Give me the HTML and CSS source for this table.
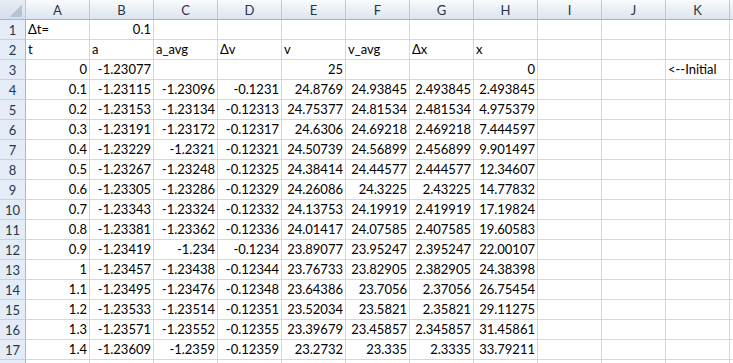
FILE: index.html
```html
<!DOCTYPE html>
<html lang="en">
<head>
    <meta charset="UTF-8">
    <title>Sheet1</title>
    <link rel="stylesheet" href="styles.css">
</head>
<body>
    <table class="sheet">
        <colgroup>
            <col class="col-rowhead">
            <col span="12" class="col-cell">
        </colgroup>
        <thead>
            <tr>
                <th class="corner"><span class="corner-mark"></span></th>
                <th>A</th><th>B</th><th>C</th><th>D</th><th>E</th><th>F</th>
                <th>G</th><th>H</th><th>I</th><th>J</th><th>K</th><th></th>
            </tr>
        </thead>
        <tbody>
            <tr><th>1</th><td>Δt=</td><td class="num">0.1</td><td></td><td></td><td></td><td></td><td></td><td></td><td></td><td></td><td></td><td></td></tr>
            <tr><th>2</th><td>t</td><td>a</td><td>a_avg</td><td>Δv</td><td>v</td><td>v_avg</td><td>Δx</td><td>x</td><td></td><td></td><td></td><td></td></tr>
            <tr><th>3</th><td class="num">0</td><td class="num">-1.23077</td><td></td><td></td><td class="num">25</td><td></td><td></td><td class="num">0</td><td></td><td></td><td>&lt;--Initial</td><td></td></tr>
            <tr><th>4</th><td class="num">0.1</td><td class="num">-1.23115</td><td class="num">-1.23096</td><td class="num">-0.1231</td><td class="num">24.8769</td><td class="num">24.93845</td><td class="num">2.493845</td><td class="num">2.493845</td><td></td><td></td><td></td><td></td></tr>
            <tr><th>5</th><td class="num">0.2</td><td class="num">-1.23153</td><td class="num">-1.23134</td><td class="num">-0.12313</td><td class="num">24.75377</td><td class="num">24.81534</td><td class="num">2.481534</td><td class="num">4.975379</td><td></td><td></td><td></td><td></td></tr>
            <tr><th>6</th><td class="num">0.3</td><td class="num">-1.23191</td><td class="num">-1.23172</td><td class="num">-0.12317</td><td class="num">24.6306</td><td class="num">24.69218</td><td class="num">2.469218</td><td class="num">7.444597</td><td></td><td></td><td></td><td></td></tr>
            <tr><th>7</th><td class="num">0.4</td><td class="num">-1.23229</td><td class="num">-1.2321</td><td class="num">-0.12321</td><td class="num">24.50739</td><td class="num">24.56899</td><td class="num">2.456899</td><td class="num">9.901497</td><td></td><td></td><td></td><td></td></tr>
            <tr><th>8</th><td class="num">0.5</td><td class="num">-1.23267</td><td class="num">-1.23248</td><td class="num">-0.12325</td><td class="num">24.38414</td><td class="num">24.44577</td><td class="num">2.444577</td><td class="num">12.34607</td><td></td><td></td><td></td><td></td></tr>
            <tr><th>9</th><td class="num">0.6</td><td class="num">-1.23305</td><td class="num">-1.23286</td><td class="num">-0.12329</td><td class="num">24.26086</td><td class="num">24.3225</td><td class="num">2.43225</td><td class="num">14.77832</td><td></td><td></td><td></td><td></td></tr>
            <tr><th>10</th><td class="num">0.7</td><td class="num">-1.23343</td><td class="num">-1.23324</td><td class="num">-0.12332</td><td class="num">24.13753</td><td class="num">24.19919</td><td class="num">2.419919</td><td class="num">17.19824</td><td></td><td></td><td></td><td></td></tr>
            <tr><th>11</th><td class="num">0.8</td><td class="num">-1.23381</td><td class="num">-1.23362</td><td class="num">-0.12336</td><td class="num">24.01417</td><td class="num">24.07585</td><td class="num">2.407585</td><td class="num">19.60583</td><td></td><td></td><td></td><td></td></tr>
            <tr><th>12</th><td class="num">0.9</td><td class="num">-1.23419</td><td class="num">-1.234</td><td class="num">-0.1234</td><td class="num">23.89077</td><td class="num">23.95247</td><td class="num">2.395247</td><td class="num">22.00107</td><td></td><td></td><td></td><td></td></tr>
            <tr><th>13</th><td class="num">1</td><td class="num">-1.23457</td><td class="num">-1.23438</td><td class="num">-0.12344</td><td class="num">23.76733</td><td class="num">23.82905</td><td class="num">2.382905</td><td class="num">24.38398</td><td></td><td></td><td></td><td></td></tr>
            <tr><th>14</th><td class="num">1.1</td><td class="num">-1.23495</td><td class="num">-1.23476</td><td class="num">-0.12348</td><td class="num">23.64386</td><td class="num">23.7056</td><td class="num">2.37056</td><td class="num">26.75454</td><td></td><td></td><td></td><td></td></tr>
            <tr><th>15</th><td class="num">1.2</td><td class="num">-1.23533</td><td class="num">-1.23514</td><td class="num">-0.12351</td><td class="num">23.52034</td><td class="num">23.5821</td><td class="num">2.35821</td><td class="num">29.11275</td><td></td><td></td><td></td><td></td></tr>
            <tr><th>16</th><td class="num">1.3</td><td class="num">-1.23571</td><td class="num">-1.23552</td><td class="num">-0.12355</td><td class="num">23.39679</td><td class="num">23.45857</td><td class="num">2.345857</td><td class="num">31.45861</td><td></td><td></td><td></td><td></td></tr>
            <tr><th>17</th><td class="num">1.4</td><td class="num">-1.23609</td><td class="num">-1.2359</td><td class="num">-0.12359</td><td class="num">23.2732</td><td class="num">23.335</td><td class="num">2.3335</td><td class="num">33.79211</td><td></td><td></td><td></td><td></td></tr>
            <tr><th></th><td></td><td></td><td></td><td></td><td></td><td></td><td></td><td></td><td></td><td></td><td></td><td></td></tr>
        </tbody>
    </table>
</body>
</html>
```

FILE: styles.css
```css
* {
    margin: 0;
    padding: 0;
    box-sizing: border-box;
}

body {
    font-family: Lato, "Liberation Sans", sans-serif;
    font-size: 13px;
    color: #000;
    background: #fff;
    overflow: hidden;
}

.sheet {
    table-layout: fixed;
    border-collapse: separate;
    border-spacing: 0;
    width: 794px;
}

.col-rowhead {
    width: 26px;
}

.col-cell {
    width: 64px;
}

.sheet th,
.sheet td {
    height: 20px;
    border-right: 1px solid #d0d7e5;
    border-bottom: 1px solid #d0d7e5;
    padding: 0 2px 2px;
    white-space: nowrap;
    overflow: hidden;
    vertical-align: bottom;
    text-align: left;
    font-weight: normal;
}

.sheet td.num {
    text-align: right;
}

.sheet thead th {
    background: linear-gradient(#f9fbfd, #dde4ee);
    border-right: 1px solid #b9c8da;
    border-bottom: 1px solid #9eb6ce;
    color: #27364a;
    text-align: center;
    vertical-align: middle;
    padding: 0;
}

.sheet tbody th {
    background: #e4ecf7;
    border-right: 1px solid #9eb6ce;
    border-bottom: 1px solid #c5d1e0;
    color: #27364a;
    text-align: center;
    vertical-align: middle;
    padding: 0;
}

.sheet thead th.corner {
    position: relative;
    background: linear-gradient(#e7edf5, #d5deea);
}

.corner-mark {
    position: absolute;
    right: 3px;
    bottom: 2px;
    width: 12px;
    height: 12px;
    background: linear-gradient(135deg, transparent 50%, #b4c3d6 50%);
}
```
